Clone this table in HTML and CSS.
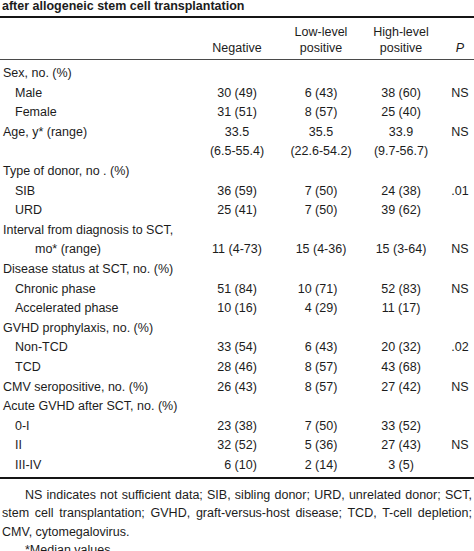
FILE: index.html
```html
<!DOCTYPE html>
<html>
<head>
<meta charset="utf-8">
<link rel="stylesheet" href="styles.css">
</head>
<body>
<div class="caption">after allogeneic stem cell transplantation</div>
<table class="tbl">
  <colgroup>
    <col class="c-lbl"><col class="c-neg"><col class="c-low"><col class="c-high"><col class="c-p">
  </colgroup>
  <thead>
    <tr>
      <th class="lbl"></th>
      <th>Negative</th>
      <th>Low-level<br>positive</th>
      <th>High-level<br>positive</th>
      <th class="pv"><i>P</i></th>
    </tr>
  </thead>
  <tbody>
    <tr><td class="lbl">Sex, no. (%)</td><td></td><td></td><td></td><td class="pv"></td></tr>
    <tr><td class="lbl sub">Male</td><td>30 (49)</td><td>6 (43)</td><td>38 (60)</td><td class="pv">NS</td></tr>
    <tr><td class="lbl sub">Female</td><td>31 (51)</td><td>8 (57)</td><td>25 (40)</td><td class="pv"></td></tr>
    <tr><td class="lbl">Age, y* (range)</td><td>33.5</td><td>35.5</td><td>33.9</td><td class="pv">NS</td></tr>
    <tr><td class="lbl"></td><td>(6.5-55.4)</td><td>(22.6-54.2)</td><td>(9.7-56.7)</td><td class="pv"></td></tr>
    <tr><td class="lbl">Type of donor, no . (%)</td><td></td><td></td><td></td><td class="pv"></td></tr>
    <tr><td class="lbl sub">SIB</td><td>36 (59)</td><td>7 (50)</td><td>24 (38)</td><td class="pv">.01</td></tr>
    <tr><td class="lbl sub">URD</td><td>25 (41)</td><td>7 (50)</td><td>39 (62)</td><td class="pv"></td></tr>
    <tr><td class="lbl">Interval from diagnosis to SCT,</td><td></td><td></td><td></td><td class="pv"></td></tr>
    <tr><td class="lbl sub2">mo* (range)</td><td>11 (4-73)</td><td>15 (4-36)</td><td>15 (3-64)</td><td class="pv">NS</td></tr>
    <tr><td class="lbl">Disease status at SCT, no. (%)</td><td></td><td></td><td></td><td class="pv"></td></tr>
    <tr><td class="lbl sub">Chronic phase</td><td>51 (84)</td><td><span class="shl">10 (71)</span></td><td>52 (83)</td><td class="pv">NS</td></tr>
    <tr><td class="lbl sub">Accelerated phase</td><td>10 (16)</td><td>4 (29)</td><td>11 (17)</td><td class="pv"></td></tr>
    <tr><td class="lbl">GVHD prophylaxis, no. (%)</td><td></td><td></td><td></td><td class="pv"></td></tr>
    <tr><td class="lbl sub">Non-TCD</td><td>33 (54)</td><td>6 (43)</td><td>20 (32)</td><td class="pv">.02</td></tr>
    <tr><td class="lbl sub">TCD</td><td>28 (46)</td><td>8 (57)</td><td>43 (68)</td><td class="pv"></td></tr>
    <tr><td class="lbl">CMV seropositive, no. (%)</td><td>26 (43)</td><td>8 (57)</td><td>27 (42)</td><td class="pv">NS</td></tr>
    <tr><td class="lbl">Acute GVHD after SCT, no. (%)</td><td></td><td></td><td></td><td class="pv"></td></tr>
    <tr><td class="lbl sub">0-I</td><td>23 (38)</td><td>7 (50)</td><td>33 (52)</td><td class="pv"></td></tr>
    <tr><td class="lbl sub">II</td><td>32 (52)</td><td>5 (36)</td><td>27 (43)</td><td class="pv">NS</td></tr>
    <tr><td class="lbl sub">III-IV</td><td><span class="shr">6 (10)</span></td><td>2 (14)</td><td>3 (5)</td><td class="pv"></td></tr>
  </tbody>
</table>
<div class="notes">
  <p>NS indicates not sufficient data; SIB, sibling donor; URD, unrelated donor; SCT, stem cell transplantation; GVHD, graft-versus-host disease; TCD, T-cell depletion; CMV, cytomegalovirus.</p>
  <p>*Median values</p>
</div>
</body>
</html>
```

FILE: styles.css
```css
html, body {
  margin: 0;
  padding: 0;
  background: #ffffff;
}

body {
  color: #1c1c1c;
  font-family: "Liberation Sans", Arial, sans-serif;
  font-size: 12.5px;
}

.caption {
  font-weight: bold;
  line-height: 12px;
  height: 16px;
  padding-left: 2px;
  white-space: nowrap;
  overflow: hidden;
}

.tbl {
  width: 474px;
  border-collapse: collapse;
  table-layout: fixed;
  border-top: 2px solid #151515;
  border-bottom: 2px solid #151515;
}

.c-lbl { width: 195px; }
.c-neg { width: 84px; }
.c-low { width: 84px; }
.c-high { width: 76px; }
.c-p { width: 35px; }

.tbl th {
  font-weight: normal;
  vertical-align: bottom;
  line-height: 16px;
  padding: 6px 0 3px;
  border-bottom: 1px solid #4a4a4a;
  text-align: center;
}

.tbl th i {
  font-style: italic;
}

.tbl td {
  padding: 0;
  line-height: 19.6px;
  white-space: nowrap;
  text-align: center;
}

.tbl tbody tr:first-child td {
  padding-top: 4px;
}

.tbl tbody tr:last-child td {
  padding-bottom: 2px;
}

.tbl .lbl {
  text-align: left;
  padding-left: 3px;
}

.tbl .sub {
  padding-left: 15px;
}

.tbl .sub2 {
  padding-left: 35px;
}

.tbl .pv {
  padding-left: 7px;
}

.shl {
  padding-right: 7px;
}

.shr {
  padding-left: 7px;
}

.notes {
  padding: 6.5px 2px 0;
  line-height: 18.5px;
  text-align: justify;
}

.notes p {
  margin: 0;
  text-indent: 23px;
}
```
